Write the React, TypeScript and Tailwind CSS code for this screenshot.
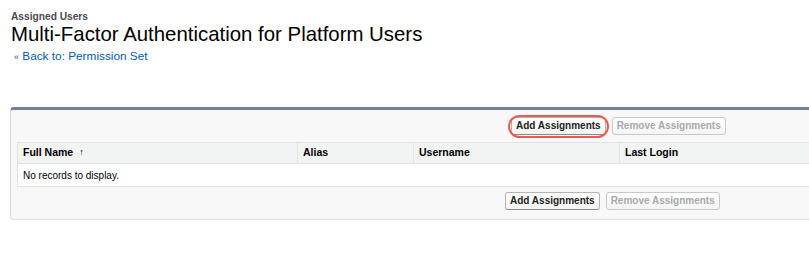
import React from "react";

const COLS = [
  { label: "Full Name", w: "w-[280px]", sort: true },
  { label: "Alias", w: "w-[116px]" },
  { label: "Username", w: "w-[206px]" },
  { label: "Last Login", w: "flex-1" },
];

function Btn({ children, disabled }: { children: React.ReactNode; disabled?: boolean }) {
  return (
    <button
      className={
        "block h-[18px] px-[4px] rounded-[3px] border text-[10px] font-bold leading-[16px] bg-gradient-to-b from-white to-[#f4f4f4] " +
        (disabled
          ? "text-[#a9a9a9] border-[#c9c9c9]"
          : "text-[#222] border-[#b5b5b5] border-b-[#8a8a8a]")
      }
    >
      {children}
    </button>
  );
}

export default function App() {
  return (
    <div className="w-[809px] h-[260px] overflow-hidden bg-white font-['Liberation_Sans',Arial,sans-serif]">
      <div className="pl-[11px]">
        <div className="pt-[11px] text-[10.2px] leading-[11px] font-bold text-[#4a4a56]">Assigned Users</div>
        <h1 className="text-[20.4px] leading-[24px] text-black">Multi-Factor Authentication for Platform Users</h1>
        <div className="mt-[3px] pl-[3px] text-[11.8px] leading-[14px]">
          <span className="text-[9px] text-[#4a4a56]">«</span>{" "}
          <a className="text-[#015ba7]">Back to: Permission Set</a>
        </div>
      </div>

      {/* Page block */}
      <div className="ml-[10px] mt-[43px] w-[840px] rounded-[4px] border border-[#dcdcdc] border-t-[3px] border-t-[#747e96] bg-[#f8f8f8] pt-[7px] pb-[9px]">
        <div className="flex items-start gap-[6px] pl-[500px] leading-none">
          <div className="relative flex">
            <Btn>Add Assignments</Btn>
            <div className="absolute -inset-x-[3px] -top-[2px] -bottom-[3px] rounded-full border-2 border-[#eb5a4f]" />
          </div>
          <Btn disabled>Remove Assignments</Btn>
        </div>

        <div className="ml-[6px] mt-[7px] w-[900px] border border-[#e0e3e5] bg-white">
          <div className="flex h-[21px] bg-[#f2f3f3] border-b border-[#e0e3e5] text-[10.5px] font-bold text-black">
            {COLS.map((c, i) => (
              <div
                key={c.label}
                className={"flex items-center pl-[5px] " + c.w + (i < COLS.length - 1 ? " border-r border-[#e0e3e5]" : "")}
              >
                {c.label}
                {c.sort && <span className="ml-[6px] text-[9px] font-normal">↑</span>}
              </div>
            ))}
          </div>
          <div className="h-[22px] flex items-center pl-[5px] text-[10px] text-black">No records to display.</div>
        </div>

        <div className="flex items-start gap-[6px] pl-[494px] mt-[5px] leading-none">
          <Btn>Add Assignments</Btn>
          <Btn disabled>Remove Assignments</Btn>
        </div>
      </div>
    </div>
  );
}
